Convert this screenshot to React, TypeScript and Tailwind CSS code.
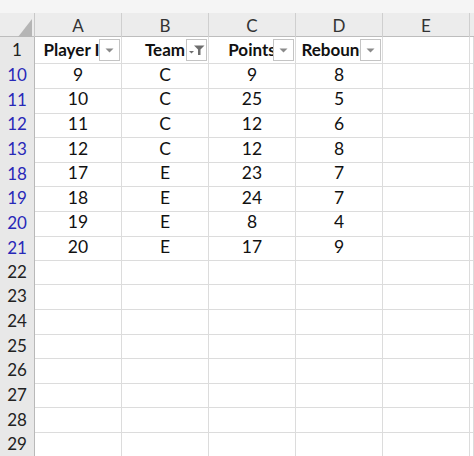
import React from 'react'

const font = { fontFamily: 'Lato, "Open Sans", "Liberation Sans", sans-serif' }

const data: [number, (string | number)[]][] = [
  [10, [9, 'C', 9, 8]],
  [11, [10, 'C', 25, 5]],
  [12, [11, 'C', 12, 6]],
  [13, [12, 'C', 12, 8]],
  [18, [17, 'E', 23, 7]],
  [19, [18, 'E', 24, 7]],
  [20, [19, 'E', 8, 4]],
  [21, [20, 'E', 17, 9]],
]

const empty = [22, 23, 24, 25, 26, 27, 28, 29]

const rowCls = 'grid grid-cols-[35px_87px_87px_87px_87px_87px_1fr] h-[24.65px]'

function DropArrow() {
  return (
    <svg width="9" height="5" viewBox="0 0 9 5">
      <polygon points="0.5,0.5 8.5,0.5 4.5,4.5" fill="#8a8a8a" />
    </svg>
  )
}

function FunnelIcon() {
  return (
    <svg width="16" height="11" viewBox="0 0 16 11">
      <polygon points="0,6 5,6 2.5,8.5" fill="#6e6e6e" />
      <polygon points="5,0.5 15.5,0.5 11.5,4.5 11.5,10 9,10 9,4.5" fill="#6e6e6e" />
    </svg>
  )
}

function FilterButton({ active }: { active?: boolean }) {
  return (
    <div className="absolute right-[1px] top-[2px] w-[21px] h-[22px] bg-white border border-[#c4c4c4] flex items-center justify-center">
      {active ? <FunnelIcon /> : <DropArrow />}
    </div>
  )
}

function HeadCell({ label, active }: { label: string; active?: boolean }) {
  return (
    <div className="relative border-r border-b border-[#dcdcdc] overflow-hidden flex items-center justify-center">
      <span className="whitespace-nowrap font-bold text-[17px] text-[#111]">{label}</span>
      <FilterButton active={active} />
    </div>
  )
}

function RowHead({ n, blue }: { n: number; blue?: boolean }) {
  return (
    <div
      className={`bg-[#e8e8e8] border-r border-r-[#b9b9b9] border-b border-b-[#d6d6d6] flex items-center justify-center text-[17px] ${
        blue ? 'text-[#2828b8]' : 'text-[#222]'
      }`}
    >
      {n}
    </div>
  )
}

function Cell({ children }: { children?: React.ReactNode }) {
  return (
    <div className="border-r border-b border-[#dcdcdc] flex items-center justify-center text-[17.5px] text-[#111]">
      {children}
    </div>
  )
}

export default function App() {
  return (
    <div className="w-[474px] h-[456px] bg-white overflow-hidden" style={font}>
      <div className="h-[13px] bg-[#f5f5f5]" />
      <div className={`${rowCls} !h-[24px] bg-[#ececec] border-b border-[#bdbdbd]`}>
        <div className="border-r border-[#c8c8c8] flex items-end justify-end pr-[2px] pb-[2px]">
          <svg width="14" height="18" viewBox="0 0 14 18">
            <polygon points="14,0 14,18 0,18" fill="#b5b5b5" />
          </svg>
        </div>
        {['A', 'B', 'C', 'D', 'E'].map((c) => (
          <div key={c} className="border-r border-[#cfcfcf] flex items-center justify-center text-[17px] text-[#333]">
            {c}
          </div>
        ))}
        <div />
      </div>
      <div className={rowCls}>
        <RowHead n={1} />
        <HeadCell label="Player ID" />
        <HeadCell label="Team" active />
        <HeadCell label="Points" />
        <HeadCell label="Rebounds" />
        <Cell />
        <Cell />
      </div>
      {data.map(([n, vals]) => (
        <div key={n} className={rowCls}>
          <RowHead n={n} blue />
          {vals.map((v, i) => (
            <Cell key={i}>{v}</Cell>
          ))}
          <Cell />
          <Cell />
        </div>
      ))}
      {empty.map((n) => (
        <div key={n} className={rowCls}>
          <RowHead n={n} />
          <Cell />
          <Cell />
          <Cell />
          <Cell />
          <Cell />
          <Cell />
        </div>
      ))}
    </div>
  )
}
